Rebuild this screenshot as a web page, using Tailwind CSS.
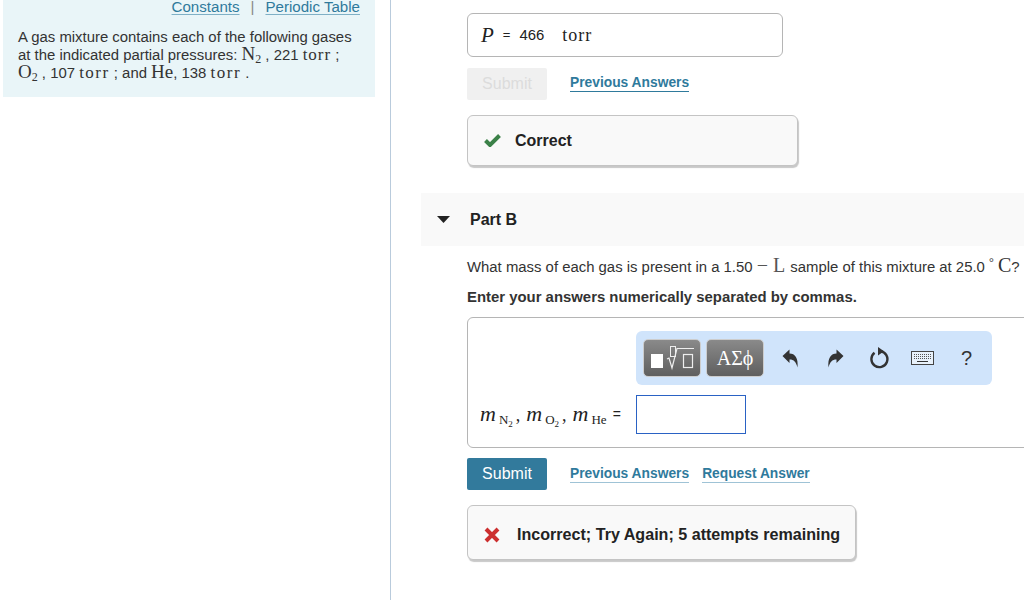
<!DOCTYPE html>
<html lang="en">

<head>
  <meta charset="UTF-8">
  <title>Part B</title>
  <script src="https://cdn.jsdelivr.net/npm/@tailwindcss/browser@4"></script>
</head>

<body class="bg-white font-['Liberation_Sans',sans-serif] text-[#222]">
  <div class="flex w-[1024px] h-[600px] overflow-hidden">

    <!-- Left column -->
    <div class="w-[391px] h-[600px] shrink-0 border-r border-[#b9cbdc] pl-[3px] pr-[15px]">
      <div class="h-[97px] bg-[#e9f5f8] pl-[15px] pr-[15px]">
        <div class="flex justify-end text-[15.1px] leading-[13px] h-[28px] text-[#2f7a9c]">
          <a class="underline underline-offset-2 decoration-[#7fb0c6]">Constants</a>
          <span class="mx-[11px] text-[#888]">|</span>
          <a class="underline underline-offset-2 decoration-[#7fb0c6]">Periodic Table</a>
        </div>
        <div class="text-[14.9px] leading-[18px] text-[#333] whitespace-nowrap">
          <p class="h-[18px]">A gas mixture contains each of the following gases</p>
          <p class="h-[18px] -mt-[1px]">at the indicated partial pressures: <span class="font-['Liberation_Serif',serif] text-[19px]">N<sub class="text-[12px]">2</sub></span> , 221 <span class="font-['Liberation_Serif',serif] text-[17px] tracking-[1px]">torr</span> ;</p>
          <p class="h-[18px]"><span class="font-['Liberation_Serif',serif] text-[19px]">O<sub class="text-[12px]">2</sub></span> , 107 <span class="font-['Liberation_Serif',serif] text-[17px] tracking-[1.5px]">torr</span> ; and <span class="font-['Liberation_Serif',serif] text-[19px]">He</span>, 138 <span class="font-['Liberation_Serif',serif] text-[17px] tracking-[1.5px]">torr</span> .</p>
        </div>
      </div>
    </div>

    <!-- Right column -->
    <div class="flex-1 min-w-0 pl-[30px] pt-[13px]">
      <div class="pl-[46px]">
        <div class="flex items-center w-[316px] h-[44px] border border-[#b5b5b5] rounded-[6px] pl-[13px] text-[14.9px]">
          <span class="font-['Liberation_Serif',serif] italic text-[21px] mr-[9px] leading-none">P</span>
          <span class="text-[13px]">=</span>
          <span class="ml-[9px]">466</span>
          <span class="ml-[18px] font-['Liberation_Serif',serif] text-[18px] tracking-[1px]">torr</span>
        </div>
        <div class="flex items-start mt-[11px] h-[32px]">
          <div class="flex items-center justify-center w-[80px] h-[32px] bg-[#f0f0f0] rounded-[2px] text-[16px] text-[#dcdcdc]">Submit</div>
          <a class="ml-[23px] mt-[6px] text-[13.8px] leading-[17px] font-bold text-[#2f7a9c] border-b border-[#2f7a9c]">Previous Answers</a>
        </div>
        <div class="flex items-center w-[331px] h-[51px] mt-[15px] pl-[16px] bg-[#f9f9f9] border border-[#c4c4c4] rounded-[6px] shadow-[1px_2px_1px_#c8c8c8]">
          <svg class="-translate-y-[1px]" width="17" height="14" viewBox="0 0 17 14"><path d="M1.5 7.5 L6 12 L15.5 2.5" fill="none" stroke="#3b8148" stroke-width="4"/></svg>
          <span class="ml-[14px] text-[16px] font-bold">Correct</span>
        </div>
      </div>

      <div class="flex items-center h-[53px] mt-[27px] bg-[#f9f9f9]">
        <svg class="ml-[16px]" width="13" height="7" viewBox="0 0 13 7"><path d="M0 0 H13 L6.5 7 Z" fill="#222"/></svg>
        <span class="ml-[20px] text-[16px] font-bold">Part B</span>
      </div>

      <div class="pl-[46px]">
        <p class="h-[18px] mt-[10px] text-[14.9px] leading-[18px] whitespace-nowrap text-[#333]">What mass of each gas is present in a 1.50 <span class="font-['Liberation_Serif',serif] text-[20px] text-[#555]">&minus; L</span> <span class="ml-[1px]">sample</span> of this mixture at 25.0 <sup class="font-['Liberation_Serif',serif] text-[12px]">&deg;</sup> <span class="font-['Liberation_Serif',serif] text-[20px]">C</span>?</p>
        <p class="mt-[14px] text-[14.9px] leading-[18px] font-bold text-[#333] whitespace-nowrap">Enter your answers numerically separated by commas.</p>

        <div class="w-[580px] h-[131px] mt-[11px] border border-[#b5b5b5] rounded-l-[6px] pt-[13px]">
          <div class="flex items-center w-[356px] h-[54px] ml-[168px] pl-[7px] bg-[#d0e4fb] rounded-[6px]">
            <div class="flex items-center justify-center w-[58px] h-[38px] rounded-[5px] border border-[#ccc] bg-gradient-to-b from-[#8a8a8a] to-[#5f5f5f]">
              <svg width="50" height="30" viewBox="0 0 50 30" fill="none">
                <rect x="4" y="11" width="12" height="14" fill="#fff"/>
                <rect x="23.5" y="3.5" width="5" height="10" stroke="#eee"/>
                <path d="M20 16 L22 15 L25 25 L30 5.5 H47" stroke="#eee" stroke-width="1.2"/>
                <rect x="36.5" y="11.5" width="9" height="13" stroke="#eee" stroke-width="1.2"/>
              </svg>
            </div>
            <div class="flex items-center justify-center w-[58px] h-[38px] ml-[5px] rounded-[5px] border border-[#ccc] bg-gradient-to-b from-[#8a8a8a] to-[#5f5f5f] font-['Liberation_Serif',serif] text-[20px] text-white">&Alpha;&Sigma;&#981;</div>
            <svg class="ml-[18px]" width="17" height="19" viewBox="0 0 17 19"><path d="M0.5 7 L7.5 0.5 V4.5 C13 4.5 16.5 9 15.5 18.5 C14 13 12 10.5 7.5 10.5 V14 Z" fill="#333"/></svg>
            <svg class="ml-[28px]" width="17" height="19" viewBox="0 0 17 19"><path d="M16.5 7 L9.5 0.5 V4.5 C4 4.5 0.5 9 1.5 18.5 C3 13 5 10.5 9.5 10.5 V14 Z" fill="#333"/></svg>
            <svg class="ml-[25px]" width="20" height="22" viewBox="0 0 20 22" fill="none"><path d="M5.5 5.8 A8 8 0 1 0 11.5 4.2" stroke="#333" stroke-width="2.4"/><path d="M9 0 L15 4.2 L9 8.5 Z" fill="#333"/></svg>
            <svg class="ml-[22px]" width="23" height="14" viewBox="0 0 23 14" fill="none"><rect x="0.5" y="0.5" width="22" height="13" fill="#e8f1fa" stroke="#444"/><path d="M3 3.5 H20 M3 5.5 H20 M3 7.5 H20" stroke="#555" stroke-dasharray="1 1"/><path d="M6 10.5 H17" stroke="#333"/></svg>
            <span class="ml-[27px] text-[20px] leading-[20px] text-[#333]">?</span>
          </div>
          <div class="flex items-center mt-[10px] pl-[12px] pr-[6px] whitespace-nowrap">
            <span class="font-['Liberation_Serif',serif] text-[22px] leading-[20px]"><i class="tracking-[3px]">m</i><sub class="text-[13px]">N<sub class="text-[9px]">2</sub></sub><span class="ml-[3px] mr-[6px] text-[18px]">,</span><i class="tracking-[3px]">m</i><sub class="text-[13px]">O<sub class="text-[9px]">2</sub></sub><span class="ml-[3px] mr-[6px] text-[18px]">,</span><i class="tracking-[3px]">m</i><sub class="text-[13px]">He</sub></span>
            <span class="ml-[6px] text-[14px]">=</span>
            <div class="w-[110px] h-[39px] ml-[15px] border border-[#2a62c4]"></div>
            <span class="ml-auto font-['Liberation_Serif',serif] text-[20px]">g</span>
          </div>
        </div>

        <div class="flex items-start mt-[10px] h-[32px]">
          <button class="w-[80px] h-[32px] bg-[#327a9c] rounded-[2px] text-[16px] text-white">Submit</button>
          <a class="ml-[23px] mt-[7px] text-[13.8px] leading-[17px] font-bold text-[#2f7a9c] border-b border-[#9fc3d6]">Previous Answers</a>
          <a class="ml-[13px] mt-[7px] text-[13.8px] leading-[17px] font-bold text-[#2f7a9c] border-b border-[#9fc3d6]">Request Answer</a>
        </div>
        <div class="flex items-center w-[389px] h-[55px] mt-[15px] pl-[16px] pt-[4px] bg-[#f9f9f9] border border-[#c4c4c4] rounded-[6px] shadow-[1px_2px_1px_#c8c8c8]">
          <svg width="16" height="16" viewBox="0 0 16 16"><path d="M2 2 L14 14 M14 2 L2 14" stroke="#cc2f2f" stroke-width="4"/></svg>
          <span class="ml-[17px] text-[16.1px] font-bold">Incorrect; Try Again; 5 attempts remaining</span>
        </div>
      </div>
    </div>
  </div>
</body>

</html>
